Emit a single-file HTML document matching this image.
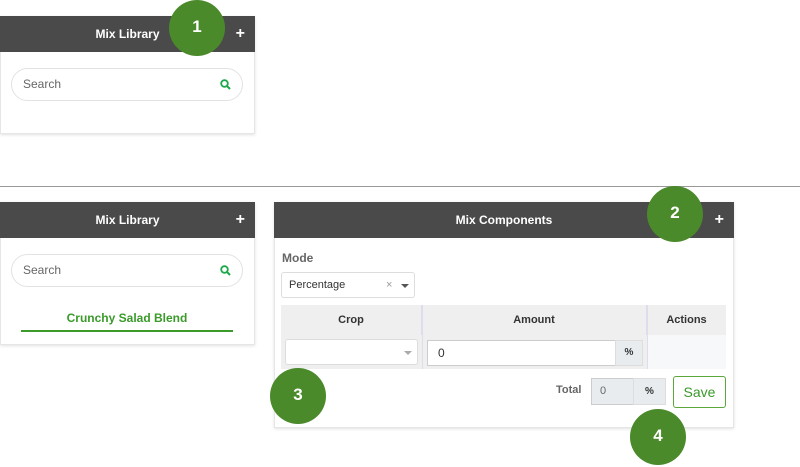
<!DOCTYPE html>
<html><head><meta charset="utf-8"><style>
*{box-sizing:border-box;margin:0;padding:0}
body{width:800px;height:467px;background:#fff;position:relative;overflow:hidden;font-family:"Liberation Sans",sans-serif;color:#333}
.abs{position:absolute}
.hdr{background:#4a4a4a;color:#fff;font-weight:bold;font-size:12px;text-align:center;line-height:36px}
.plus{position:absolute;right:10px;top:0;font-size:16px;font-weight:bold}
.panel{border:1px solid #e6e6e6;box-shadow:0 1px 3px rgba(0,0,0,.12);background:#fff}
.search{border:1px solid #e2e2e2;border-radius:17px;font-size:12px;color:#666;padding-left:11px;line-height:31px}
.circ{position:absolute;width:56px;height:56px;border-radius:50%;background:#4a8a2a;color:#fff;font-weight:bold;font-size:17px;text-align:center;line-height:54px}
.tc{font-size:11px;font-weight:bold;text-align:center;line-height:30px;background:#efefef;border-right:1px solid #dde}
</style></head><body>

<!-- panel 1 -->
<div class="abs panel" style="left:0;top:16px;width:255px;height:118px"></div>
<div class="abs hdr" style="left:0;top:16px;width:255px;height:36px">Mix Library<span class="plus">+</span></div>
<div class="abs search" style="left:11px;top:68px;width:232px;height:33px">Search</div>
<svg class="abs" style="left:220px;top:79px" width="11" height="11" viewBox="0 0 11 11"><circle cx="4.5" cy="4.5" r="3.3" fill="none" stroke="#1ba84a" stroke-width="1.8"/><path d="M7 7L10 10" stroke="#1ba84a" stroke-width="2"/></svg>
<div class="circ" style="left:169px;top:0px">1</div>

<div class="abs" style="left:0;top:186px;width:800px;height:1px;background:#999"></div>

<!-- panel 2 -->
<div class="abs panel" style="left:0;top:202px;width:255px;height:143px"></div>
<div class="abs hdr" style="left:0;top:202px;width:255px;height:36px">Mix Library<span class="plus">+</span></div>
<div class="abs search" style="left:11px;top:254px;width:232px;height:33px">Search</div>
<svg class="abs" style="left:220px;top:265px" width="11" height="11" viewBox="0 0 11 11"><circle cx="4.5" cy="4.5" r="3.3" fill="none" stroke="#1ba84a" stroke-width="1.8"/><path d="M7 7L10 10" stroke="#1ba84a" stroke-width="2"/></svg>
<div class="abs" style="left:21px;top:311px;width:212px;text-align:center;font-size:12px;font-weight:bold;color:#3a9a2a">Crunchy Salad Blend</div>
<div class="abs" style="left:21px;top:330px;width:212px;height:2px;background:#3a9a2a"></div>

<!-- panel 3 -->
<div class="abs panel" style="left:274px;top:202px;width:460px;height:226px"></div>
<div class="abs hdr" style="left:274px;top:202px;width:460px;height:36px">Mix Components<span class="plus">+</span></div>
<div class="abs" style="left:282px;top:251px;font-size:12px;font-weight:bold;color:#666">Mode</div>
<div class="abs" style="left:281px;top:272px;width:134px;height:26px;border:1px solid #ddd;border-radius:3px;font-size:11px;line-height:24px;padding-left:7px">Percentage<span style="position:absolute;left:104px;color:#999">×</span><span style="position:absolute;left:119px;top:11px;border:4px solid transparent;border-top:4px solid #555;border-bottom:0"></span></div>

<div class="abs" style="left:281px;top:305px;width:445px;height:64px;background:#f7f8fa"></div>
<div class="abs tc" style="left:281px;top:305px;width:141px">Crop</div>
<div class="abs tc" style="left:422px;top:305px;width:225px">Amount</div>
<div class="abs tc" style="left:647px;top:305px;width:79px;border-right:0">Actions</div>
<div class="abs" style="left:281px;top:335px;width:366px;height:34px;background:#efefef"></div>
<div class="abs" style="left:422px;top:305px;width:1px;height:64px;background:#dde"></div>
<div class="abs" style="left:647px;top:305px;width:1px;height:64px;background:#dde"></div>
<div class="abs" style="left:285px;top:339px;width:133px;height:26px;background:#fff;border:1px solid #ddd;border-radius:3px"><span style="position:absolute;left:118px;top:11px;border:4px solid transparent;border-top:4px solid #aaa;border-bottom:0"></span></div>
<div class="abs" style="left:427px;top:340px;width:189px;height:26px;background:#fff;border:1px solid #ccc;font-size:12px;line-height:24px;padding-left:10px">0</div>
<div class="abs" style="left:615px;top:340px;width:28px;height:26px;background:#e9ecef;border:1px solid #ddd;font-size:10px;font-weight:bold;line-height:24px;text-align:center">%</div>

<div class="abs" style="left:556px;top:384px;font-size:11px;font-weight:bold;color:#666">Total</div>
<div class="abs" style="left:591px;top:378px;width:43px;height:27px;background:#e9ecef;border:1px solid #ccc;font-size:11px;line-height:25px;padding-left:8px;color:#666">0</div>
<div class="abs" style="left:633px;top:378px;width:33px;height:27px;background:#e9ecef;border:1px solid #ddd;font-size:10px;font-weight:bold;line-height:25px;text-align:center">%</div>
<div class="abs" style="left:673px;top:376px;width:53px;height:32px;border:1px solid #5aa83a;border-radius:3px;color:#3a9a2a;font-size:14px;line-height:30px;text-align:center">Save</div>

<div class="circ" style="left:647px;top:186px">2</div>
<div class="circ" style="left:270px;top:368px">3</div>
<div class="circ" style="left:630px;top:409px">4</div>
</body></html>
